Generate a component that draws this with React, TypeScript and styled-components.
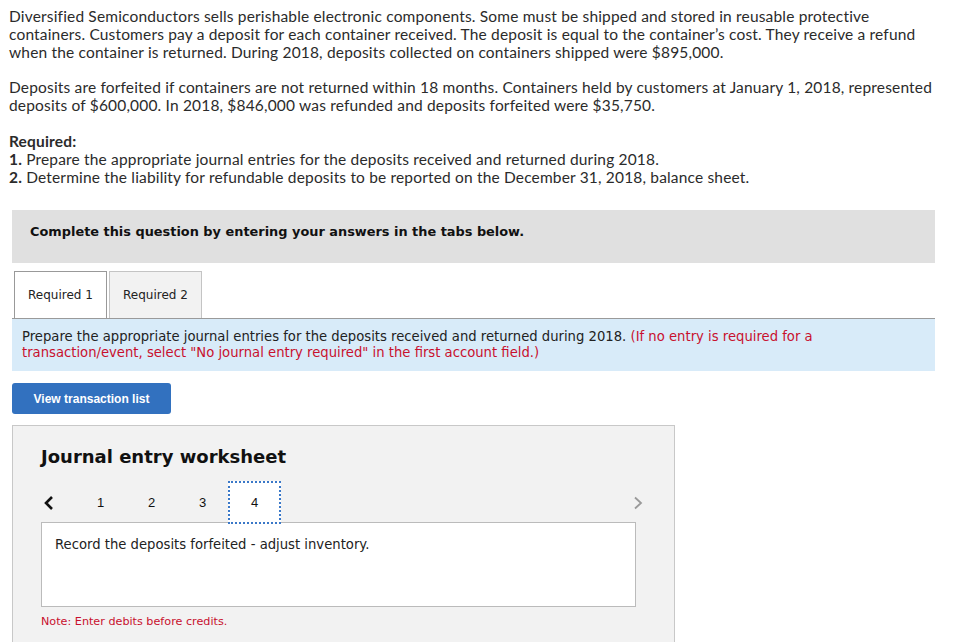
import styled, { createGlobalStyle } from 'styled-components'

const GlobalStyle = createGlobalStyle`
    body {
        margin: 0;
        background: #fff;
        font-family: "Lato", "Open Sans", sans-serif;
        color: #222;
    }
`

const Page = styled.div`
    width: 958px;
    padding: 8px 0 0 9px;
    box-sizing: border-box;
`
const Intro = styled.div`
    width: 932px;
    font-size: 15.5px;
    letter-spacing: 0.17px;
    line-height: 17.8px;
    color: #2b2b2b;

    & p {
        margin: 0 0 18px 0;
    }
`
const Panels = styled.div`
    margin-left: 3px;
    width: 923px;
    font-family: "DejaVu Sans", Verdana, sans-serif;
`
const Banner = styled.div`
    background: #e0e0e0;
    margin-top: 24px;
    padding: 14px 18px 23px;
    font-size: 12.9px;
    font-weight: bold;
    line-height: 16px;
    color: #111;
`
const TabRow = styled.div`
    display: flex;
    gap: 2px;
    margin-top: 8px;
    padding-left: 2px;
    border-bottom: 1px solid #9a9a9a;
`
const Tab = styled.div<{ $active?: boolean }>`
    width: 93px;
    height: 47px;
    box-sizing: border-box;
    display: flex;
    align-items: center;
    justify-content: center;
    font-size: 12px;
    color: #222;
    background: ${p => p.$active ? '#fff' : '#f2f2f2'};
    border: 1px solid ${p => p.$active ? '#999' : '#c4c4c4'};
    border-bottom: none;
`
const Info = styled.div`
    background: #d8ebf9;
    padding: 10px 60px 10px 10px;
    font-size: 13.2px;
    line-height: 16px;
    color: #222;
`
const Red = styled.span`
    color: #c8102e;
`
const Button = styled.button`
    margin-top: 12px;
    width: 159px;
    height: 31px;
    border: none;
    border-radius: 3px;
    background: #3271bf;
    color: #fff;
    font-family: "Liberation Sans", Arial, sans-serif;
    font-weight: bold;
    font-size: 12px;
    letter-spacing: 0;
    display: block;
`
const Worksheet = styled.div`
    margin-top: 11px;
    width: 663px;
    box-sizing: border-box;
    background: #f2f2f2;
    border: 1px solid #c8c8c8;
    border-bottom: none;
    padding: 20px 0 30px 28px;
`
const Title = styled.div`
    font-size: 18px;
    font-weight: bold;
    line-height: 22px;
    color: #111;
`
const Nav = styled.div`
    display: flex;
    align-items: center;
    margin-top: 13px;
    width: 602px;
    height: 43px;
`
const Arrow = styled.div<{ $right?: boolean }>`
    width: 34px;
    display: flex;
    justify-content: ${p => p.$right ? 'flex-end' : 'flex-start'};
    padding-left: ${p => p.$right ? '0' : '3px'};
    margin-left: ${p => p.$right ? 'auto' : '0'};
    box-sizing: border-box;
`
const Step = styled.div<{ $active?: boolean }>`
    position: relative;
    z-index: 1;
    width: ${p => p.$active ? '53px' : '51px'};
    height: 43px;
    box-sizing: border-box;
    display: flex;
    align-items: center;
    justify-content: center;
    font-family: "Liberation Sans", Arial, sans-serif;
    font-size: 13px;
    color: #111;
    background: ${p => p.$active ? '#fff' : 'transparent'};
    border: ${p => p.$active ? '2px dotted #3a78c8' : 'none'};
`
const EntryBox = styled.div`
    margin-top: -2px;
    width: 595px;
    height: 85px;
    box-sizing: border-box;
    background: #fff;
    border: 1px solid #bbb;
    padding: 14px 13px;
    font-size: 13.2px;
    line-height: 16px;
    color: #222;
`
const Note = styled.div`
    margin-top: 8px;
    font-size: 11.2px;
    line-height: 14px;
    color: #c8102e;
`

const Chevron = ({ right }: { right?: boolean }) => (
    <svg width="10" height="14" viewBox="0 0 10 14">
        {right
            ? <polyline points="2,1.5 8,7 2,12.5" fill="none" stroke="#9a9a9a" strokeWidth="1.8" />
            : <polyline points="8,1 2,7 8,13" fill="none" stroke="#111" strokeWidth="2.6" />}
    </svg>
)

export default function App() {
    return (
        <Page>
            <GlobalStyle />
            <Intro>
                <p>
                    Diversified Semiconductors sells perishable electronic components. Some must be shipped and stored in reusable protective containers. Customers pay a deposit for each container received. The deposit is equal to the container’s cost. They receive a refund when the container is returned. During 2018, deposits collected on containers shipped were $895,000.
                </p>
                <p>
                    Deposits are forfeited if containers are not returned within 18 months. Containers held by customers at January 1, 2018, represented deposits of $600,000. In 2018, $846,000 was refunded and deposits forfeited were $35,750.
                </p>
                <div><b>Required:</b></div>
                <div><b>1.</b> Prepare the appropriate journal entries for the deposits received and returned during 2018.</div>
                <div><b>2.</b> Determine the liability for refundable deposits to be reported on the December 31, 2018, balance sheet.</div>
            </Intro>
            <Panels>
                <Banner>Complete this question by entering your answers in the tabs below.</Banner>
                <TabRow>
                    <Tab $active>Required 1</Tab>
                    <Tab>Required 2</Tab>
                </TabRow>
                <Info>
                    Prepare the appropriate journal entries for the deposits received and returned during 2018. <Red>(If no entry is required for a transaction/event, select "No journal entry required" in the first account field.)</Red>
                </Info>
                <Button>View transaction list</Button>
                <Worksheet>
                    <Title>Journal entry worksheet</Title>
                    <Nav>
                        <Arrow><Chevron /></Arrow>
                        {[1, 2, 3, 4].map(n => (
                            <Step key={n} $active={n === 4}>{n}</Step>
                        ))}
                        <Arrow $right><Chevron right /></Arrow>
                    </Nav>
                    <EntryBox>Record the deposits forfeited - adjust inventory.</EntryBox>
                    <Note>Note: Enter debits before credits.</Note>
                </Worksheet>
            </Panels>
        </Page>
    )
}
